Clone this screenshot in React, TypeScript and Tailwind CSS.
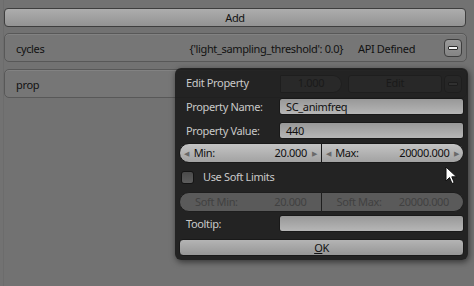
import React from 'react';

const field =
  'h-[17px] flex items-center pt-px px-[6px] rounded-[3px] border border-[#191919] bg-gradient-to-b from-[#989898] to-[#b6b6b6] text-[#101010]';

function Arrow({ dir }: { dir: 'l' | 'r' }) {
  return <span className="text-[7px] text-[#6a6a6a] leading-none">{dir === 'l' ? '◀' : '▶'}</span>;
}

function MinusButton() {
  return (
    <div className="w-[18px] h-[18px] rounded-[4px] border border-[#3d3d3d] bg-gradient-to-b from-[#9a9a9a] to-[#848484] flex items-center justify-center">
      <div className="w-[10px] h-[4px] rounded-[1px] border border-[#2a2a2a] bg-[#f2f2f2]" />
    </div>
  );
}

function Cursor() {
  return (
    <svg className="absolute left-[445px] top-[166px]" width="13" height="19" viewBox="0 0 13 19">
      <path d="M1 1 L1 15 L4.5 11.5 L7 17.5 L9.2 16.6 L6.8 10.8 L11.5 10.8 Z" fill="#ffffff" stroke="#111111" strokeWidth="1" strokeLinejoin="round" />
    </svg>
  );
}

export default function App() {
  return (
    <div className="relative w-[474px] h-[286px] overflow-hidden bg-[#727272] font-['Noto_Sans',sans-serif] text-[11px] tracking-[-0.35px] text-[#121212]">
      <div className="absolute left-[3px] top-0 bottom-0 w-px bg-[#6c6c6c]" />

      {/* property list */}
      <div className="flex flex-col pt-[8px] pl-[4px] pr-[7px]">
        <div className="h-[19px] mr-px pt-px flex items-center justify-center rounded-[4px] border border-[#3e3e3e] bg-gradient-to-b from-[#adadad] to-[#939393]">
          Add
        </div>

        <div className="mt-[6px] h-[29px] flex items-center pl-[11px] pr-[4px] rounded-[5px] border border-[#585858] bg-[#767676] shadow-[inset_0_1px_0_#828282]">
          <span className="flex-1 pt-[3px]">cycles</span>
          <span className="mr-[15px] pt-[3px]">{"{'light_sampling_threshold': 0.0}"}</span>
          <span className="w-[86px] pt-[3px]">API Defined</span>
          <MinusButton />
        </div>

        <div className="mt-[7px] h-[29px] flex items-center pl-[11px] pr-[4px] rounded-[5px] border border-[#585858] bg-[#767676] shadow-[inset_0_1px_0_#828282]">
          <span className="flex-1 pt-[3px]">prop</span>
          <div className="w-[62px] h-[18px] rounded-r-full rounded-l-[3px] border border-[#3e3e3e] bg-[#a8a8a8] flex items-center justify-center">
            1.000
          </div>
          <div className="ml-[6px] w-[94px] h-[18px] rounded-[3px] border border-[#3e3e3e] bg-[#a0a0a0] flex items-center justify-center">
            Edit
          </div>
          <div className="ml-[2px]">
            <MinusButton />
          </div>
        </div>
      </div>

      {/* edit property popup */}
      <div className="absolute left-[175px] top-[68px] w-[293px] h-[192px] flex flex-col px-[4px] pb-[4px] rounded-[6px] bg-[#1b1b1b]/90 shadow-[1px_2px_6px_rgba(0,0,0,0.55)] text-[#c9c9c9]">
        <div className="h-[29px] flex items-center pt-[2px] pl-[7px]">Edit Property</div>

        <div className="h-[17px] grid grid-cols-[100px_1fr] items-center">
          <span className="pl-[7px] pt-[2px]">Property Name:</span>
          <div className={field}>SC_animfreq</div>
        </div>

        <div className="mt-[7px] h-[17px] grid grid-cols-[100px_1fr] items-center">
          <span className="pl-[7px] pt-[2px]">Property Value:</span>
          <div className={field}>440</div>
        </div>

        <div className="mt-[5px] h-[18px] grid grid-cols-2 text-[#101010]">
          <div className="flex items-center gap-[5px] pt-px pl-[4px] pr-[4px] rounded-l-full border border-[#191919] bg-gradient-to-b from-[#c4c4c4] to-[#a2a2a2]">
            <Arrow dir="l" />
            <span className="flex-1">Min:</span>
            <span>20.000</span>
            <Arrow dir="r" />
          </div>
          <div className="flex items-center gap-[5px] pt-px pl-[4px] pr-[4px] rounded-r-full border border-l-0 border-[#191919] bg-gradient-to-b from-[#c4c4c4] to-[#a2a2a2]">
            <Arrow dir="l" />
            <span className="flex-1">Max:</span>
            <span>20000.000</span>
            <Arrow dir="r" />
          </div>
        </div>

        <div className="mt-[10px] h-[13px] flex items-center gap-[9px] pl-[2px]">
          <div className="w-[13px] h-[13px] rounded-[3px] border border-[#141414] bg-gradient-to-b from-[#4a4a4a] to-[#5c5c5c]" />
          <span>Use Soft Limits</span>
        </div>

        <div className="mt-[8px] h-[18px] grid grid-cols-2 text-[#414141]">
          <div className="flex items-center pt-px pl-[15px] pr-[14px] rounded-l-full border border-[#1e1e1e] bg-[#5a5a5a]">
            <span className="flex-1">Soft Min:</span>
            <span>20.000</span>
          </div>
          <div className="flex items-center pt-px pl-[15px] pr-[14px] rounded-r-full border border-l-0 border-[#1e1e1e] bg-[#5a5a5a]">
            <span className="flex-1">Soft Max:</span>
            <span>20000.000</span>
          </div>
        </div>

        <div className="mt-[5px] h-[17px] grid grid-cols-[100px_1fr] items-center">
          <span className="pl-[7px] pt-px">Tooltip:</span>
          <div className={field} />
        </div>

        <div className="mt-[7px] h-[17px] pt-px flex items-center justify-center rounded-[4px] border border-[#191919] bg-gradient-to-b from-[#b4b4b4] to-[#969696] text-[#101010]">
          <span>
            <span className="underline">O</span>K
          </span>
        </div>
      </div>

      <Cursor />
    </div>
  );
}
